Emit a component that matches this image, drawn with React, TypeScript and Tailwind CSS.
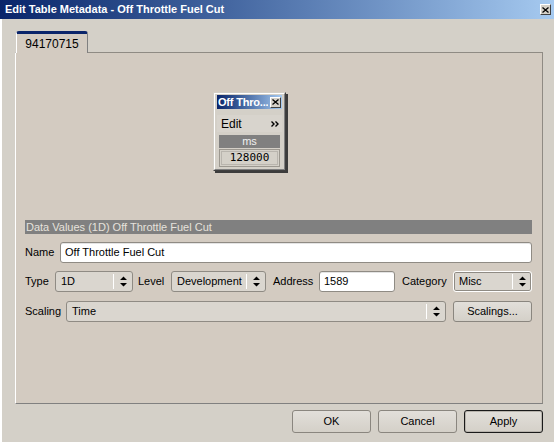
import React from "react";

const UI: React.CSSProperties = { fontFamily: '"Liberation Sans", Arial, sans-serif' };
const MONO: React.CSSProperties = { fontFamily: '"DejaVu Sans Mono", "Liberation Mono", monospace' };

function Arrows() {
  return (
    <svg width="7" height="11" viewBox="0 0 7 11">
      <path d="M0 4 L3.5 0.5 L7 4 Z M0 7 L7 7 L3.5 10.5 Z" fill="#000" />
    </svg>
  );
}

function CloseGlyph() {
  return (
    <svg width="7" height="6" viewBox="0 0 7 6">
      <path d="M0.5 0.5 L6.5 5.5 M6.5 0.5 L0.5 5.5" stroke="#000" strokeWidth="1.3" />
    </svg>
  );
}

function Chevrons() {
  return (
    <svg width="8" height="6" viewBox="0 0 8 6">
      <path d="M0.5 0.5 L3 3 L0.5 5.5 M4.5 0.5 L7 3 L4.5 5.5" stroke="#000" strokeWidth="1.4" fill="none" />
    </svg>
  );
}

function Select({ w, text, focused }: { w: string; text: string; focused?: boolean }) {
  return (
    <div
      className={`flex h-[21px] ${w} shrink-0 items-stretch rounded-[3px] border bg-[#dad6cf] ${
        focused ? "border-white shadow-[inset_0_0_0_1px_#8f8b84]" : "border-[#8f8b84]"
      }`}
    >
      <span className="flex-1 truncate pl-[5px] leading-[19px]">{text}</span>
      <span className="my-[2px] w-px bg-white" />
      <span className="flex w-[18px] items-center justify-center">
        <Arrows />
      </span>
    </div>
  );
}

function TextInput({ w, text }: { w: string; text: string }) {
  return (
    <div
      className={`h-[21px] ${w} shrink-0 rounded-[3px] border border-[#8f8b84] bg-white pl-[4px] leading-[19px] shadow-[inset_0_1px_0_#e4e4e4]`}
    >
      {text}
    </div>
  );
}

function Button({ label, primary }: { label: string; primary?: boolean }) {
  return (
    <div
      className={`flex h-[23px] w-[79px] items-center justify-center rounded-[3px] border bg-gradient-to-b from-[#e2dfda] to-[#d4d0c8] ${
        primary ? "border-[#1a1a1a] shadow-[inset_0_0_0_1px_#b8b4ad]" : "border-[#8a867f]"
      }`}
    >
      {label}
    </div>
  );
}

function TableWindow() {
  return (
    <div className="ml-[197px] mt-[39px] w-[73px] border border-t-[#d4d0c8] border-l-[#d4d0c8] border-r-[#404040] border-b-[#404040] bg-[#d4d0c8] shadow-[2px_2px_0_#3c3c3c]">
      <div className="border border-t-white border-l-white border-r-[#808080] border-b-[#808080] px-[2px] pb-[2px] pt-px">
        <div className="flex h-[14px] items-center justify-between gap-px overflow-hidden bg-gradient-to-r from-[#0a246a] to-[#a6caf0] pl-[1px] pr-[1px]">
          <span className="overflow-hidden whitespace-nowrap text-[11px] font-bold leading-none tracking-[-0.2px] text-white">
            Off Thro...
          </span>
          <span className="flex h-[11px] w-[11px] shrink-0 items-center justify-center border border-t-white border-l-white border-r-[#404040] border-b-[#404040] bg-[#d4d0c8]">
            <CloseGlyph />
          </span>
        </div>
        <div className="mt-[6px] flex h-[17px] items-center justify-between bg-[#d8d4cd] pl-[4px] pr-[3px] text-[12px]">
          <span>Edit</span>
          <Chevrons />
        </div>
        <div className="mx-[2px] mt-[3px] flex h-[13px] items-center justify-center bg-[#808080] text-[11px] text-[#f0f0f0]">
          ms
        </div>
        <div className="mx-[2px] mt-px border border-[#9c9890] p-px">
          <div className="flex h-[14px] items-center justify-center border border-[#b9b5ae] text-[11px] text-black" style={MONO}>
            128000
          </div>
        </div>
      </div>
    </div>
  );
}

export default function App() {
  return (
    <div
      className="flex h-[442px] w-[554px] flex-col overflow-hidden bg-[#d4d0c8] text-[11px] text-black shadow-[inset_2px_0_0_#fff,inset_1px_0_0_#d4d0c8]"
      style={UI}
    >
      <div className="flex h-[19px] shrink-0 items-center justify-between bg-gradient-to-r from-[#0a246a] to-[#a6caf0] pl-[5px] pr-[3px]">
        <span className="text-[11px] font-bold text-white">Edit Table Metadata - Off Throttle Fuel Cut</span>
        <span className="flex h-[11px] w-[11px] items-center justify-center border border-t-white border-l-white border-r-[#404040] border-b-[#404040] bg-[#d4d0c8]">
          <CloseGlyph />
        </span>
      </div>

      <div className="ml-[15px] mt-[12px] w-[528px]">
        <div className="relative z-10 -mb-px ml-px flex h-[22px] w-[72px] items-center justify-center rounded-t-[3px] border-t-[3px] border-l border-r border-t-[#0a246a] border-l-white border-r-[#808080] bg-[#d3cbc1] pt-[1px] text-[12px]">
          94170715
        </div>
        <div className="flex h-[352px] flex-col border border-t-[#8f8b84] border-l-white border-r-[#8f8b84] border-b-[#808080] bg-[#d3cbc1] px-[9px]">
          <div className="-ml-[9px]">
            <TableWindow />
          </div>

          <div className="mt-[49px] h-[14px] w-[507px] bg-[#808080] pl-[1px] leading-[14px] text-[#e6e2dc]">
            Data Values (1D) Off Throttle Fuel Cut
          </div>

          <div className="mt-[8px] flex items-center">
            <span className="w-[35px]">Name</span>
            <TextInput w="w-[472px]" text="Off Throttle Fuel Cut" />
          </div>

          <div className="mt-[8px] flex items-center">
            <span className="w-[30px] shrink-0">Type</span>
            <Select w="w-[78px]" text="1D" />
            <span className="w-[38px] shrink-0 pl-[5px]">Level</span>
            <Select w="w-[95px]" text="Development" />
            <span className="w-[53px] shrink-0 pl-[7px]">Address</span>
            <TextInput w="w-[76px]" text="1589" />
            <span className="w-[58px] shrink-0 pl-[7px]">Category</span>
            <Select w="w-[79px]" text="Misc" focused />
          </div>

          <div className="mt-[9px] flex items-center">
            <span className="w-[41px] shrink-0">Scaling</span>
            <Select w="w-[380px]" text="Time" />
            <div className="ml-[7px] flex h-[21px] w-[79px] items-center justify-center rounded-[3px] border border-[#8a867f] bg-gradient-to-b from-[#e2dfda] to-[#d4d0c8]">
              Scalings...
            </div>
          </div>
        </div>
      </div>

      <div className="mt-[6px] flex justify-end gap-[7px] pr-[11px]">
        <Button label="OK" />
        <Button label="Cancel" />
        <Button label="Apply" primary />
      </div>
    </div>
  );
}
